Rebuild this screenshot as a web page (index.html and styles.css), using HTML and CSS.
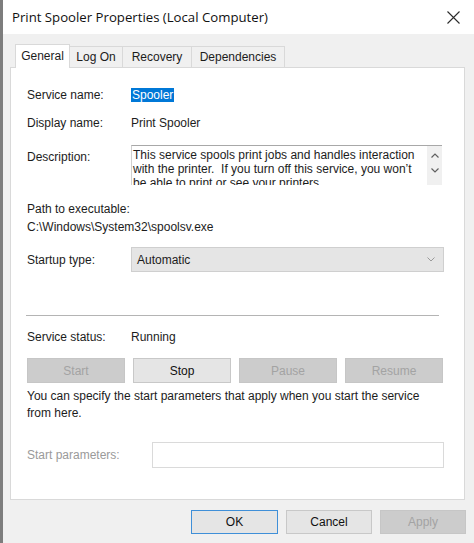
FILE: index.html
```html
<!DOCTYPE html>
<html lang="en">
<head>
<meta charset="utf-8">
<title>Print Spooler Properties (Local Computer)</title>
<link rel="stylesheet" href="styles.css">
</head>
<body>
<div class="window">
  <div class="titlebar">
    <span class="title">Print Spooler Properties (Local Computer)</span>
    <span class="close">
      <svg width="13" height="13" viewBox="0 0 13 13"><path d="M0.5 0.5 L12.5 12.5 M12.5 0.5 L0.5 12.5" stroke="#2b2b2b" stroke-width="1.1" fill="none"/></svg>
    </span>
  </div>
  <div class="tabs">
    <div class="tab active t-general">General</div>
    <div class="tab t-logon">Log On</div>
    <div class="tab t-recovery">Recovery</div>
    <div class="tab t-deps">Dependencies</div>
  </div>
  <div class="panel">
    <div class="row">
      <span class="label">Service name:</span>
      <span class="sel">Spooler</span>
    </div>
    <div class="row r-display">
      <span class="label">Display name:</span>
      <span class="value">Print Spooler</span>
    </div>
    <div class="row r-desc">
      <span class="label desc-label">Description:</span>
      <div class="desc-box">
        <div class="desc-text">This service spools print jobs and handles interaction with the printer.&nbsp; If you turn off this service, you won’t be able to print or see your printers.</div>
        <div class="scroll">
          <svg width="8" height="5" viewBox="0 0 8 5"><path d="M0.5 4.5 L4 1 L7.5 4.5" stroke="#606060" stroke-width="1.2" fill="none"/></svg>
          <svg width="8" height="5" viewBox="0 0 8 5"><path d="M0.5 0.5 L4 4 L7.5 0.5" stroke="#606060" stroke-width="1.2" fill="none"/></svg>
        </div>
      </div>
    </div>
    <div class="row r-path">Path to executable:</div>
    <div class="row">C:\Windows\System32\spoolsv.exe</div>
    <div class="row r-startup">
      <span class="label">Startup type:</span>
      <div class="combo">
        <span>Automatic</span>
        <svg width="8" height="5" viewBox="0 0 8 5"><path d="M0.5 0.5 L4 4 L7.5 0.5" stroke="#9a9a9a" stroke-width="1" fill="none"/></svg>
      </div>
    </div>
    <div class="separator"></div>
    <div class="row r-status">
      <span class="label">Service status:</span>
      <span class="value">Running</span>
    </div>
    <div class="svc-buttons">
      <div class="btn disabled">Start</div>
      <div class="btn">Stop</div>
      <div class="btn disabled">Pause</div>
      <div class="btn disabled">Resume</div>
    </div>
    <p class="help">You can specify the start parameters that apply when you start the service from here.</p>
    <div class="row r-params">
      <span class="label params-label">Start parameters:</span>
      <div class="params-box"></div>
    </div>
  </div>
  <div class="footer">
    <div class="btn fbtn default">OK</div>
    <div class="btn fbtn">Cancel</div>
    <div class="btn fbtn disabled">Apply</div>
  </div>
</div>
</body>
</html>
```
FILE: styles.css
```css
* { box-sizing: border-box; }
html, body { margin: 0; padding: 0; }
body {
  background: #ffffff;
  font-family: "Liberation Sans", Arial, sans-serif;
  font-size: 12px;
  color: #1c1c1c;
}
.window {
  width: 474px;
  height: 543px;
  border-left: 3px solid #7d7d7d;
  background: #f0f0f0;
  display: flex;
  flex-direction: column;
  overflow: hidden;
}
.titlebar {
  height: 34px;
  flex: none;
  background: #ffffff;
  display: flex;
  align-items: center;
  justify-content: space-between;
  padding: 0 14px 0 9px;
}
.title {
  font-family: "Open Sans", "Noto Sans", sans-serif;
  font-size: 13.2px;
  color: #111;
}
.close { display: flex; }
.tabs {
  height: 33px;
  flex: none;
  display: flex;
  align-items: flex-end;
  padding-left: 12px;
  position: relative;
  z-index: 1;
}
.tab {
  height: 21px;
  border-top: 1px solid #d9d9d9;
  border-right: 1px solid #d9d9d9;
  background: #f0f0f0;
  display: flex;
  align-items: center;
  justify-content: center;
  color: #1c1c1c;
}
.tab.active {
  height: 24px;
  margin-bottom: -1px;
  background: #ffffff;
  border-left: 1px solid #d9d9d9;
  padding-bottom: 2px;
}
.t-general { width: 55px; }
.t-logon { width: 53px; }
.t-recovery { width: 69px; }
.t-deps { width: 93px; }
.panel {
  margin-left: 7px;
  width: 455px;
  height: 433px;
  flex: none;
  background: #ffffff;
  border: 1px solid #d9d9d9;
  padding: 18px 0 0 16px;
}
.row {
  display: flex;
  align-items: center;
  height: 18px;
}
.label { width: 104px; flex: none; }
.sel {
  background: #0078d7;
  color: #ffffff;
  padding: 0 1px;
  line-height: 14px;
}
.r-display { margin-top: 10px; }
.r-desc {
  margin-top: 13px;
  height: 40px;
  align-items: flex-start;
}
.desc-label { margin-top: 5px; }
.desc-box {
  width: 311px;
  height: 40px;
  border: 1px solid #d0d0d0;
  border-top-color: #a8a8a8;
  border-right: none;
  border-bottom: none;
  display: flex;
  overflow: hidden;
}
.desc-text {
  flex: 1;
  padding: 2px 0 0 1px;
  line-height: 14px;
}
.scroll {
  width: 15px;
  flex: none;
  background: #f0f0f0;
  display: flex;
  flex-direction: column;
  align-items: center;
  gap: 10px;
  padding-top: 7px;
}
.r-path { margin-top: 15px; }
.r-startup { margin-top: 11px; height: 25px; }
.combo {
  width: 313px;
  height: 25px;
  background: #e5e5e5;
  border: 1px solid #cfcfcf;
  display: flex;
  align-items: center;
  justify-content: space-between;
  padding: 0 8px 0 5px;
}
.separator {
  margin-top: 43px;
  margin-left: -1px;
  width: 413px;
  height: 1px;
  background: #b4b4b4;
}
.r-status { margin-top: 12px; }
.svc-buttons {
  margin-top: 12px;
  width: 416px;
  display: grid;
  grid-template-columns: repeat(4, 1fr);
  gap: 8px;
}
.btn {
  height: 25px;
  display: flex;
  align-items: center;
  justify-content: center;
  background: #e5e5e5;
  border: 1px solid #c8c8c8;
  color: #111;
}
.btn.disabled {
  background: #cccccc;
  border-color: #c6c6c6;
  color: #a3a3a3;
}
.help {
  margin: 5px 0 0 0;
  width: 416px;
  line-height: 17px;
}
.r-params { margin-top: 20px; height: 26px; }
.params-label { width: 125px; color: #9a9a9a; }
.params-box {
  width: 292px;
  height: 26px;
  border: 1px solid #dadada;
  background: #ffffff;
}
.footer {
  margin-top: 10px;
  display: flex;
  justify-content: flex-end;
  gap: 8px;
  padding-right: 8px;
}
.fbtn { width: 86px; height: 24px; }
.btn.default {
  width: 87px;
  border-color: #3f8fd8;
}
```
